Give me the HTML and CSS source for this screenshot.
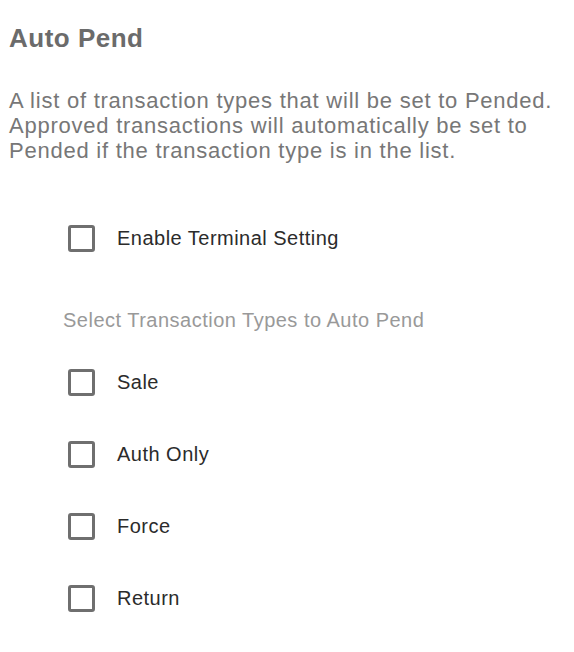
FILE: index.html
```html
<!DOCTYPE html>
<html lang="en">
<head>
    <meta charset="UTF-8">
    <meta name="viewport" content="width=device-width, initial-scale=1.0">
    <title>Auto Pend</title>
    <link rel="stylesheet" href="styles.css">
</head>
<body>
    <div class="setting-panel">
        <h2>Auto Pend</h2>
        <p class="description">A list of transaction types that will be set to Pended. Approved transactions will automatically be set to Pended if the transaction type is in the list.</p>

        <div class="options">
            <label class="check-row">
                <input type="checkbox" name="enableTerminal">
                <span class="box"></span>
                <span class="check-label">Enable Terminal Setting</span>
            </label>

            <div class="group-title">Select Transaction Types to Auto Pend</div>

            <label class="check-row">
                <input type="checkbox" name="sale">
                <span class="box"></span>
                <span class="check-label">Sale</span>
            </label>
            <label class="check-row">
                <input type="checkbox" name="authOnly">
                <span class="box"></span>
                <span class="check-label">Auth Only</span>
            </label>
            <label class="check-row">
                <input type="checkbox" name="force">
                <span class="box"></span>
                <span class="check-label">Force</span>
            </label>
            <label class="check-row">
                <input type="checkbox" name="return">
                <span class="box"></span>
                <span class="check-label">Return</span>
            </label>
        </div>
    </div>
</body>
</html>
```

FILE: styles.css
```css
* {
    box-sizing: border-box;
    margin: 0;
    padding: 0;
}

body {
    font-family: 'Liberation Sans', Arial, sans-serif;
    background-color: #fff;
    color: #333;
}

.setting-panel {
    padding: 22px 9px 0 9px;
}

h2 {
    font-size: 26px;
    font-weight: bold;
    color: #6b6b6b;
    line-height: 32px;
    letter-spacing: 0.5px;
}

.description {
    margin-top: 34px;
    font-size: 22px;
    line-height: 25px;
    letter-spacing: 0.76px;
    color: #777;
}

.options {
    padding-left: 54px;
    margin-top: 39px;
}

.check-row {
    display: flex;
    align-items: center;
    height: 72px;
    cursor: pointer;
}

.check-row input {
    display: none;
}

.box {
    width: 27px;
    height: 27px;
    margin-left: 5px;
    border: 3px solid #6f6f6f;
    border-radius: 3px;
    flex-shrink: 0;
}

.check-label {
    margin-left: 22px;
    font-size: 20px;
    letter-spacing: 0.48px;
    color: #2b2b2b;
}

.group-title {
    height: 52px;
    margin-top: 20px;
    display: flex;
    align-items: center;
    font-size: 20px;
    letter-spacing: 0.49px;
    color: #999;
}
```
